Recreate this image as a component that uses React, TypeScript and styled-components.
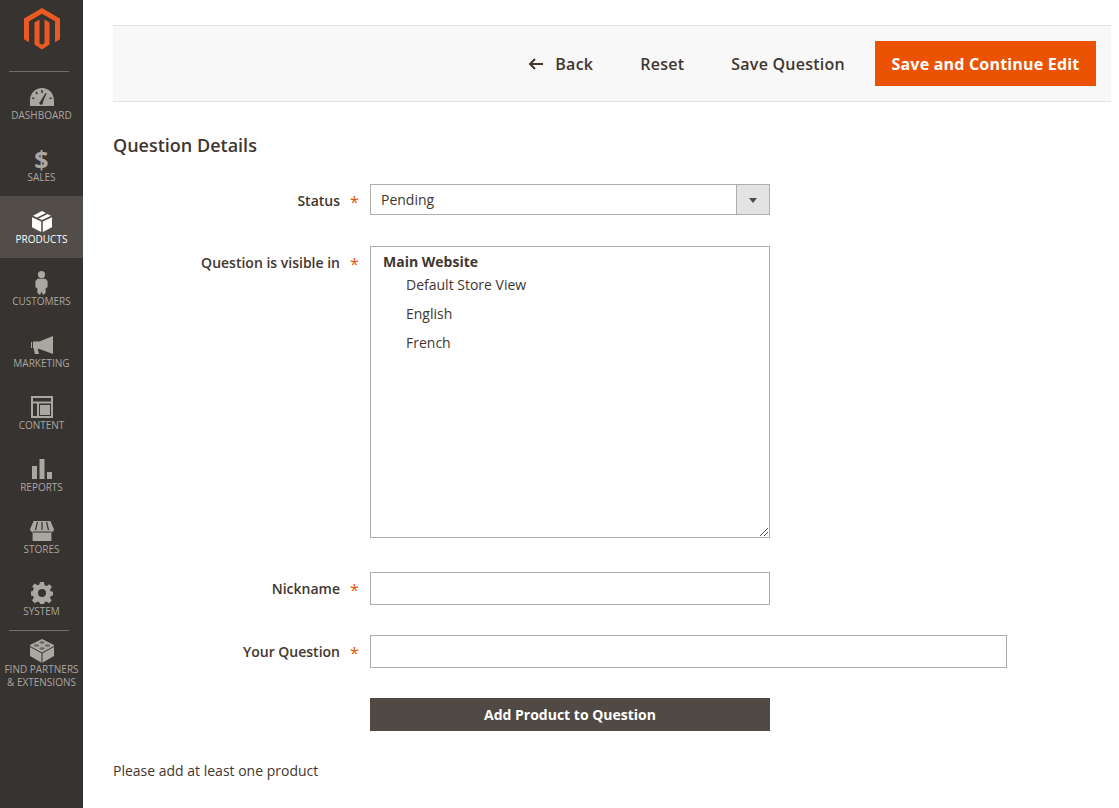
import React from "react";
import styled, { createGlobalStyle } from "styled-components";

const Global = createGlobalStyle`
  html, body { margin: 0; padding: 0; background: #fff; }
  body { font-family: "Open Sans", "Noto Sans", sans-serif; color: #41362f; overflow: hidden; }
  * { box-sizing: border-box; }
`;

const Page = styled.div`
  display: flex;
  width: 1119px;
  height: 808px;
  overflow: hidden;
`;

const Sidebar = styled.nav`
  flex: 0 0 83px;
  width: 83px;
  background: #373330;
  display: flex;
  flex-direction: column;
  align-items: stretch;
`;

const LogoBox = styled.div`
  height: 71px;
  padding-top: 8px;
  display: flex;
  justify-content: center;
  align-items: flex-start;
`;

const Divider = styled.div`
  height: 1px;
  margin: 0 14px 0 9px;
  background: #736d68;
`;

const NavItem = styled.div<{ $active?: boolean }>`
  height: 62px;
  padding-top: 14px;
  display: flex;
  flex-direction: column;
  align-items: center;
  background: ${(p) => (p.$active ? "#524d49" : "transparent")};
  color: ${(p) => (p.$active ? "#fff" : "#aaa6a0")};
`;

const NavIcon = styled.div`
  height: 22px;
  display: flex;
  align-items: center;
  justify-content: center;
`;

const NavLabel = styled.span<{ $active?: boolean }>`
  margin-top: 1px;
  font-size: 10px;
  line-height: 13px;
  text-align: center;
  white-space: nowrap;
  letter-spacing: 0;
  color: ${(p) => (p.$active ? "#fff" : "#aaa6a0")};
`;

const Main = styled.main`
  flex: 1;
  padding: 25px 8px 0 30px;
  min-width: 0;
`;

const Toolbar = styled.div`
  height: 77px;
  background: #f8f8f8;
  border-top: 1px solid #e3e3e3;
  border-bottom: 1px solid #e3e3e3;
  display: flex;
  align-items: center;
  justify-content: flex-end;
  padding-right: 15px;
`;

const TextButton = styled.button`
  border: 0;
  background: none;
  padding: 0;
  margin-right: 47px;
  font: 600 16px/22px "Open Sans", sans-serif;
  letter-spacing: 0.25px;
  color: #41362f;
  display: flex;
  align-items: center;
  gap: 12px;
`;

const PrimaryButton = styled.button`
  width: 221px;
  height: 45px;
  margin-left: -17px;
  border: 0;
  background: #eb5202;
  color: #fff;
  font: 700 16px/22px "Open Sans", sans-serif;
  letter-spacing: 0.2px;
  padding: 0;
`;

const Heading = styled.h2`
  margin: 31px 0 26px;
  font-size: 18px;
  line-height: 25px;
  font-weight: 600;
  color: #41362f;
`;

const Row = styled.div<{ $gap: number }>`
  display: grid;
  grid-template-columns: 227px 30px 1fr;
  margin-bottom: ${(p) => p.$gap}px;
  align-items: start;
`;

const Label = styled.label`
  text-align: right;
  font-size: 14px;
  font-weight: 600;
  line-height: 20px;
  color: #41362f;
  padding-top: 7px;
`;

const Star = styled.span`
  color: #e22626;
  color: #eb5202;
  font-size: 16px;
  line-height: 20px;
  padding: 8px 0 0 10px;
`;

const Select = styled.div`
  width: 400px;
  height: 31px;
  border: 1px solid #adadad;
  display: flex;
  background: #fff;
`;

const SelectValue = styled.span`
  flex: 1;
  padding-left: 10px;
  font-size: 14px;
  line-height: 29px;
  color: #41362f;
`;

const SelectArrowBox = styled.span`
  width: 33px;
  background: #e3e3e3;
  border-left: 1px solid #adadad;
  display: flex;
  align-items: center;
  justify-content: center;
`;

const Arrow = styled.span`
  width: 0;
  height: 0;
  border-left: 4px solid transparent;
  border-right: 4px solid transparent;
  border-top: 5px solid #514943;
  margin-top: 1px;
`;

const ListBox = styled.div`
  position: relative;
  width: 400px;
  height: 292px;
  border: 1px solid #adadad;
  padding: 5px 12px;
  font-size: 14px;
  color: #41362f;
`;

const Group = styled.div`
  font-weight: 700;
  line-height: 20px;
  margin-bottom: 3px;
`;

const Option = styled.div`
  padding-left: 23px;
  line-height: 20px;
  margin-bottom: 9px;
`;

const Grip = styled.svg`
  position: absolute;
  right: 0;
  bottom: 0;
`;

const Input = styled.input<{ $w: number }>`
  display: block;
  width: ${(p) => p.$w}px;
  height: 33px;
  border: 1px solid #adadad;
  background: #fff;
  padding: 0 10px;
  outline: none;
`;

const DarkButton = styled.button`
  display: block;
  width: 400px;
  height: 33px;
  margin-left: 257px;
  border: 0;
  background: #514943;
  color: #fff;
  font: 700 14px/20px "Open Sans", sans-serif;
  padding: 0;
`;

const Note = styled.p`
  margin: 30px 0 0;
  font-size: 14px;
  line-height: 20px;
  color: #41362f;
`;

const Logo = () => (
  <svg width="36" height="42" viewBox="0 0 36 42" fill="#eb5a22">
    <path d="M18 0 36 10.4V31.3L31 34.2V13.3L18 5.8 5 13.3V34.2L0 31.3V10.4Z" />
    <path d="M15.5 11.5V35.2L18 36.7 20.5 35.2V11.5L25.5 14.4V36.6L18 41.5 10.5 36.6V14.4Z" />
  </svg>
);

const ic = "#aaa6a0";
const icons: Record<string, React.ReactNode> = {
  DASHBOARD: (
    <svg width="24" height="18" viewBox="0 0 24 18">
      <path fill={ic} fillRule="evenodd" d="M12 0C5.4 0 0 5.4 0 12.2V18H24V12.2C24 5.4 18.6 0 12 0ZM15.5 5 16.6 5.6 12.8 14.2A1.8 1.8 0 1 1 10.5 13.2Z" />
      <g fill="#373330">
        <rect x="11.3" y="2" width="1.4" height="3" />
        <rect x="6" y="3.8" width="1.4" height="2.4" transform="rotate(-35 6.7 5)" />
        <rect x="2.6" y="9" width="1.4" height="2.4" transform="rotate(-70 3.3 10.2)" />
        <rect x="20" y="9" width="1.4" height="2.4" transform="rotate(70 20.7 10.2)" />
      </g>
    </svg>
  ),
  SALES: (
    <span style={{ font: '700 25px/22px "Open Sans", sans-serif', color: ic }}>$</span>
  ),
  PRODUCTS: (
    <svg width="20" height="21" viewBox="0 0 20 21">
      <path fill="#fff" d="M10 0 14 2 5 6.6 1 4.8ZM15.6 2.9 19 4.7 10 9 6.6 7.4ZM0 6.3 9.2 10.6V21L0 16.2ZM20 6.3V16.2L10.8 21V10.6Z" />
      <path fill="#e7b57a" d="M10.8 10.6 20 6.3V10.4L10.8 15Z" opacity="0" />
    </svg>
  ),
  CUSTOMERS: (
    <svg width="13" height="24" viewBox="0 0 13 24">
      <circle cx="6.5" cy="3.6" r="3.6" fill={ic} />
      <path fill={ic} d="M2.5 7.8H10.5L12.6 10V16L10.6 17.5V22L8 24 6.5 20.5 5 24 2.4 22V17.5L.4 16V10Z" />
    </svg>
  ),
  MARKETING: (
    <svg width="22" height="18" viewBox="0 0 22 18">
      <path fill={ic} d="M22 0V18L8.4 13H6.7L8 18H4L2.5 12H0V6H1V12H2V5.5H8.4Z" />
    </svg>
  ),
  CONTENT: (
    <svg width="22" height="22" viewBox="0 0 22 22">
      <path fill={ic} fillRule="evenodd" d="M0 0H22V22H0ZM2 2V5.5H20V2ZM2 7.5V20H6V7.5ZM8 7.5V20H20V7.5Z" />
      <rect x="9" y="9" width="10" height="10" fill={ic} />
    </svg>
  ),
  REPORTS: (
    <svg width="20" height="20" viewBox="0 0 20 20">
      <rect x="0" y="7" width="5" height="13" fill={ic} />
      <rect x="7.5" y="0" width="5" height="20" fill={ic} />
      <rect x="15" y="13" width="5" height="7" fill={ic} />
    </svg>
  ),
  STORES: (
    <svg width="24" height="20" viewBox="0 0 24 20">
      <path fill={ic} d="M3.6 0H20.4L24 8.2C24 10 22.5 10.8 21.4 10.8V20H2.6V10.8C1.5 10.8 0 10 0 8.2Z" />
      <path stroke="#373330" strokeWidth="1.2" fill="none" d="M7.5 1 5.5 9M12 1V9M16.5 1 18.5 9M3 11H21" />
    </svg>
  ),
  SYSTEM: (
    <svg width="22" height="22" viewBox="0 0 22 22">
      <path fill={ic} fillRule="evenodd" d="M9 0H13L13.6 3.2 15.6 4 18.3 2.2 21 5 19 7.6 19.8 9.5 22 9.5V13.4L19.8 14 19 16 20.7 18.6 18 21.2 15.5 19.5 13.6 20.2 13 22H9L8.4 20.2 6.4 19.4 3.8 21.2 1 18.4 2.8 15.8 2 14 0 13.4V9.4L2 8.8 2.8 6.8 1.2 4.2 3.8 1.6 6.4 3.2 8.4 2.4ZM11 7A4 4 0 1 0 11 15 4 4 0 1 0 11 7Z" />
    </svg>
  ),
  FIND: (
    <svg width="24" height="24" viewBox="0 0 24 24">
      <path fill={ic} d="M12 0 24 6V17L12 24 0 17V6Z" />
      <path stroke="#373330" strokeWidth="1" fill="none" d="M0 7.5 12 14 24 7.5M12 14V24" />
      <ellipse cx="12" cy="3.5" rx="2.6" ry="1.2" fill="#373330" opacity=".55" />
      <ellipse cx="6.5" cy="6.5" rx="2.6" ry="1.2" fill="#373330" opacity=".55" />
      <ellipse cx="17.5" cy="6.5" rx="2.6" ry="1.2" fill="#373330" opacity=".55" />
      <ellipse cx="12" cy="9.5" rx="2.6" ry="1.2" fill="#373330" opacity=".55" />
    </svg>
  ),
};

const navTop = ["DASHBOARD", "SALES", "PRODUCTS", "CUSTOMERS", "MARKETING", "CONTENT", "REPORTS", "STORES", "SYSTEM"];

const PartnerItem = styled(NavItem)`
  padding-top: 9px;
  height: auto;
`;

export default function App() {
  return (
    <Page>
      <Global />
      <Sidebar>
        <LogoBox>
          <Logo />
        </LogoBox>
        <Divider />
        {navTop.map((n) => (
          <NavItem key={n} $active={n === "PRODUCTS"}>
            <NavIcon>{icons[n]}</NavIcon>
            <NavLabel $active={n === "PRODUCTS"}>{n}</NavLabel>
          </NavItem>
        ))}
        <Divider />
        <PartnerItem>
          <NavIcon>{icons.FIND}</NavIcon>
          <NavLabel>
            FIND PARTNERS
            <br />& EXTENSIONS
          </NavLabel>
        </PartnerItem>
      </Sidebar>
      <Main>
        <Toolbar>
          <TextButton>
            <svg width="15" height="12" viewBox="0 0 15 12" fill="none" stroke="#41362f" strokeWidth="2">
              <path d="M15 6H2M7 1 2 6 7 11" />
            </svg>
            Back
          </TextButton>
          <TextButton>Reset</TextButton>
          <TextButton>Save Question</TextButton>
          <PrimaryButton>Save and Continue Edit</PrimaryButton>
        </Toolbar>
        <Heading>Question Details</Heading>
        <Row $gap={31}>
          <Label>Status</Label>
          <Star>*</Star>
          <Select>
            <SelectValue>Pending</SelectValue>
            <SelectArrowBox>
              <Arrow />
            </SelectArrowBox>
          </Select>
        </Row>
        <Row $gap={34}>
          <Label>Question is visible in</Label>
          <Star>*</Star>
          <ListBox>
            <Group>Main Website</Group>
            <Option>Default Store View</Option>
            <Option>English</Option>
            <Option>French</Option>
            <Grip width="10" height="10" viewBox="0 0 10 10" stroke="#555" fill="none">
              <path d="M1 9 9 1M5 9 9 5" />
            </Grip>
          </ListBox>
        </Row>
        <Row $gap={30}>
          <Label>Nickname</Label>
          <Star>*</Star>
          <Input $w={400} />
        </Row>
        <Row $gap={30}>
          <Label>Your Question</Label>
          <Star>*</Star>
          <Input $w={637} />
        </Row>
        <DarkButton>Add Product to Question</DarkButton>
        <Note>Please add at least one product</Note>
      </Main>
    </Page>
  );
}
